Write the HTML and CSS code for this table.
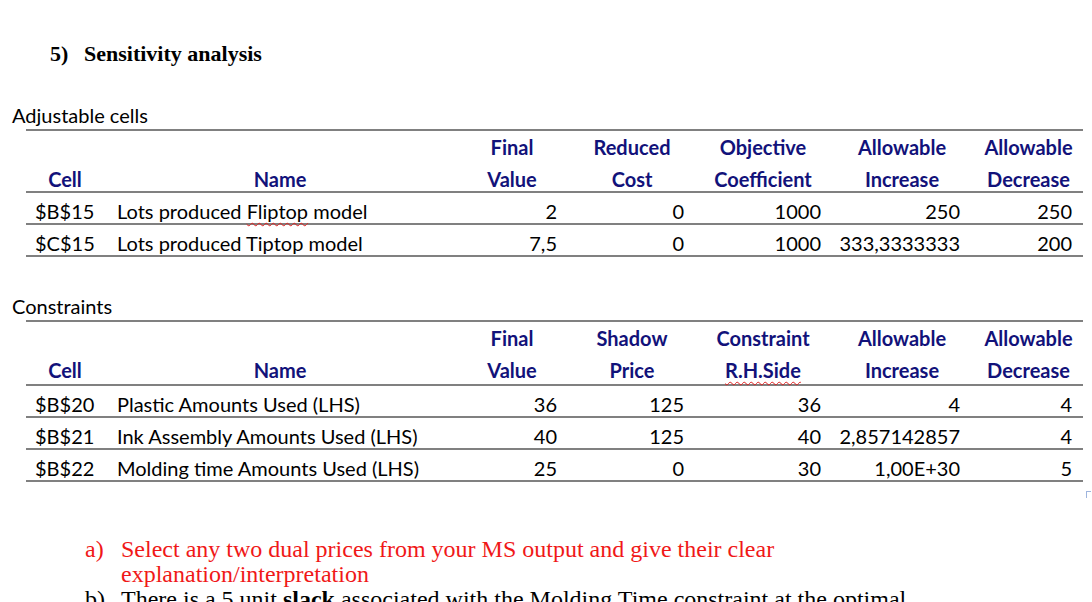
FILE: index.html
```html
<!DOCTYPE html>
<html>
<head>
<meta charset="utf-8">
<link rel="stylesheet" href="styles.css">
</head>
<body>
<div class="page">
  <h2 class="title"><span class="num">5)</span><span>Sensitivity analysis</span></h2>

  <div class="label label-adj">Adjustable cells</div>
  <div class="tbl">
    <div class="row head h60">
      <div class="c">Cell</div>
      <div class="c">Name</div>
      <div class="c">Final<br>Value</div>
      <div class="c">Reduced<br>Cost</div>
      <div class="c">Objective<br>Coefficient</div>
      <div class="c">Allowable<br>Increase</div>
      <div class="c">Allowable<br>Decrease</div>
    </div>
    <div class="row body">
      <div class="c">$B$15</div>
      <div class="c">Lots produced <span class="spell">Fliptop</span> model</div>
      <div class="c">2</div>
      <div class="c">0</div>
      <div class="c">1000</div>
      <div class="c">250</div>
      <div class="c">250</div>
    </div>
    <div class="row body">
      <div class="c">$C$15</div>
      <div class="c">Lots produced Tiptop model</div>
      <div class="c">7,5</div>
      <div class="c">0</div>
      <div class="c">1000</div>
      <div class="c">333,3333333</div>
      <div class="c">200</div>
    </div>
  </div>

  <div class="label label-con">Constraints</div>
  <div class="tbl tbl-con">
    <div class="row head h62">
      <div class="c">Cell</div>
      <div class="c">Name</div>
      <div class="c">Final<br>Value</div>
      <div class="c">Shadow<br>Price</div>
      <div class="c">Constraint<br><span class="spell">R.H.Side</span></div>
      <div class="c">Allowable<br>Increase</div>
      <div class="c">Allowable<br>Decrease</div>
    </div>
    <div class="row body">
      <div class="c">$B$20</div>
      <div class="c">Plastic Amounts Used (LHS)</div>
      <div class="c">36</div>
      <div class="c">125</div>
      <div class="c">36</div>
      <div class="c">4</div>
      <div class="c">4</div>
    </div>
    <div class="row body">
      <div class="c">$B$21</div>
      <div class="c">Ink Assembly Amounts Used (LHS)</div>
      <div class="c">40</div>
      <div class="c">125</div>
      <div class="c">40</div>
      <div class="c">2,857142857</div>
      <div class="c">4</div>
    </div>
    <div class="row body">
      <div class="c">$B$22</div>
      <div class="c">Molding time Amounts Used (LHS)</div>
      <div class="c">25</div>
      <div class="c">0</div>
      <div class="c">30</div>
      <div class="c">1,00E+30</div>
      <div class="c">5</div>
    </div>
    <span class="handle"></span>
  </div>

  <ol class="questions">
    <li class="q red"><span class="mk">a)</span><span class="tx">Select any two dual prices from your MS output and give their clear explanation/interpretation</span></li>
    <li class="q"><span class="mk">b)</span><span class="tx">There is a 5 unit <b>slack</b> associated with the Molding Time constraint at the optimal solution. Explain what this means.</span></li>
  </ol>
</div>
</body>
</html>
```

FILE: styles.css
```css
html, body {
  margin: 0;
  padding: 0;
  background: #ffffff;
}
.page {
  width: 1092px;
  height: 602px;
  overflow: hidden;
  padding-top: 41px;
  box-sizing: border-box;
  font-family: "Lato", "Liberation Sans", sans-serif;
  color: #000;
}
.title {
  margin: 0;
  padding-left: 50px;
  font-family: "Liberation Serif", serif;
  font-weight: bold;
  font-size: 22px;
  line-height: 26px;
  display: flex;
}
.title .num {
  width: 34px;
}
.label {
  font-size: 20px;
  line-height: 24px;
  padding-left: 12px;
}
.label-adj {
  margin-top: 36px;
}
.label-con {
  margin-top: 37px;
}
.tbl {
  position: relative;
  margin-top: 2px;
  margin-left: 26px;
  width: 1057px;
  border-top: 2px solid #808080;
}
.row {
  display: grid;
  grid-template-columns: 78px 352px 112px 128px 134px 144px 109px;
  border-bottom: 2px solid #808080;
  font-size: 20px;
}
.head {
  color: #12127a;
  font-weight: bold;
  line-height: 32px;
}
.head.h60 { height: 60px; }
.head.h62 { height: 62px; }
.head .c {
  text-align: center;
  display: flex;
  flex-direction: column;
  justify-content: flex-start;
  overflow: visible;
}
.head .c:nth-child(1),
.head .c:nth-child(2) {
  padding-top: 32px;
}
.body {
  height: 32px;
  line-height: 26px;
  padding-top: 5px;
  box-sizing: border-box;
}
.body .c { text-align: right; white-space: nowrap; }
.body .c:nth-child(1) { text-align: left; padding-left: 9px; }
.body .c:nth-child(2) { text-align: left; padding-left: 13px; }
.body .c:nth-child(3) { padding-right: 11px; }
.body .c:nth-child(4) { padding-right: 12px; }
.body .c:nth-child(5) { padding-right: 9px; }
.body .c:nth-child(6) { padding-right: 14px; }
.body .c:nth-child(7) { padding-right: 11px; }
.spell {
  text-decoration: underline wavy #e02020;
  text-decoration-thickness: 1px;
  text-underline-offset: 3px;
}
.handle {
  position: absolute;
  right: -8px;
  bottom: -16px;
  width: 4px;
  height: 6px;
  border-top: 1px solid #9fb5de;
  border-left: 1px solid #9fb5de;
}
.questions {
  list-style: none;
  margin: 55px 0 0 0;
  padding: 0 0 0 85px;
  font-family: "Liberation Serif", serif;
  font-size: 24px;
  line-height: 25px;
}
.q {
  display: grid;
  grid-template-columns: 36px 800px;
}
.q.red {
  color: #f01818;
}
.q.red .tx {
  width: 700px;
}
```
